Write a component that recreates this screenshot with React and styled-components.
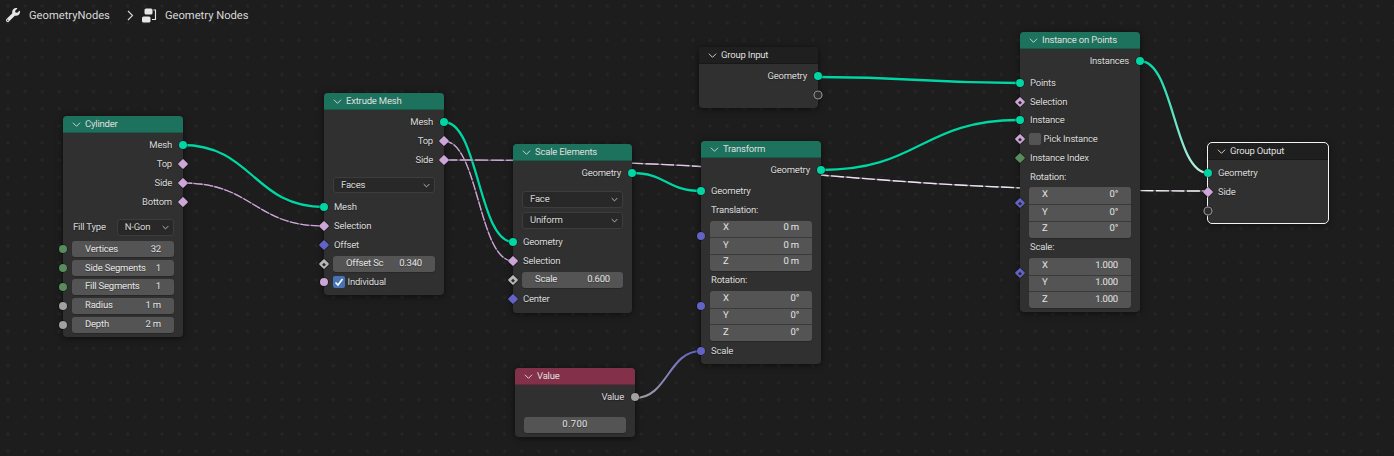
import React from "react";
import styled, { createGlobalStyle } from "styled-components";
import { FaWrench } from "react-icons/fa";

const GlobalStyle = createGlobalStyle`
  html, body { margin: 0; padding: 0; background: #1d1d1d; }
  * { box-sizing: border-box; }
`;

const TEAL = "#00d6a3";
const PINK = "#cca6d6";
const BLUE = "#6363c7";
const GREEN = "#598c5c";
const GREY = "#a1a1a1";

const Stage = styled.div`
  position: relative;
  width: 1394px;
  height: 456px;
  overflow: hidden;
  background-color: #1d1d1d;
  background-image: radial-gradient(circle, #262626 1.4px, transparent 1.7px);
  background-size: 17.14px 17.14px;
  background-position: -0.6px -2.6px;
  font-family: Roboto, "Open Sans", sans-serif;
  font-size: 9.5px;
  letter-spacing: -0.2px;
  text-rendering: geometricPrecision;
  color: #d8d8d8;
`;

const Crumbs = styled.div`
  position: absolute;
  top: 7px;
  left: 6px;
  height: 16px;
  display: flex;
  align-items: center;
  font-size: 11.2px;
  letter-spacing: 0;
  color: #d8d8d8;
`;

const CrumbText = styled.span`
  margin-left: ${(p) => p.$ml}px;
`;

const CrumbIcon = styled.span`
  display: flex;
  margin-left: ${(p) => p.$ml || 0}px;
  color: #e6e6e6;
`;

const WireLayer = styled.svg`
  position: absolute;
  inset: 0;
`;

const Node = styled.div`
  position: absolute;
  left: ${(p) => p.$x}px;
  top: ${(p) => p.$y}px;
  width: ${(p) => p.$w || 120}px;
  height: ${(p) => p.$h}px;
  background: #303030;
  border-radius: 4px;
  box-shadow: 0 1px 7px rgba(0, 0, 0, 0.55);
  outline: ${(p) => (p.$selected ? "1.5px solid #f4f4f4" : "none")};
`;

const Header = styled.div`
  height: 17px;
  display: flex;
  align-items: center;
  padding: 0 0 0 9px;
  gap: 4px;
  border-radius: 4px 4px 0 0;
  background: ${(p) => p.$bg};
  border-bottom: 1px solid rgba(0, 0, 0, 0.2);
  color: #dfdfdf;
`;

const Row = styled.div`
  position: relative;
  height: ${(p) => p.$h || 19}px;
  margin-top: ${(p) => p.$mt || 0}px;
  display: flex;
  align-items: center;
  justify-content: ${(p) => (p.$out ? "flex-end" : "flex-start")};
  padding: ${(p) => (p.$tight ? 0 : 1)}px ${(p) => (p.$out ? 11 : 9)}px 0 ${(p) => (p.$tight ? 9 : 10)}px;
  text-shadow: 0 1px 1px rgba(0, 0, 0, 0.35);
`;

const Socket = styled.span`
  position: absolute;
  top: 50%;
  ${(p) => (p.$out ? "right: -4px;" : "left: -4px;")}
  width: 8px;
  height: 8px;
  margin-top: -4px;
  background: ${(p) => p.$color || "#2e2e2e"};
  border: ${(p) => (p.$hollow ? "1px solid #9a9a9a" : "none")};
  border-radius: ${(p) => (p.$diamond ? "1px" : "50%")};
  transform: ${(p) => (p.$diamond ? "rotate(45deg) scale(0.92)" : p.$hollow ? "scale(1.15)" : "none")};
  box-shadow: 0 0 0 0.5px rgba(0, 0, 0, 0.6);
  &::after {
    content: "";
    display: ${(p) => (p.$dot ? "block" : "none")};
    width: 3px;
    height: 3px;
    margin: 2.5px;
    background: #2a2a2a;
  }
`;

const Field = styled.div`
  flex: 1;
  height: 16px;
  display: flex;
  align-items: center;
  justify-content: space-between;
  padding: 0 13px;
  background: #545454;
  border-radius: 3px;
  box-shadow: 0 1px 1px rgba(0, 0, 0, 0.2);
  color: #e4e4e4;
  white-space: nowrap;
`;

const CenteredField = styled(Field)`
  justify-content: center;
  letter-spacing: 0.3px;
`;

const Select = styled.div`
  flex: 1;
  height: 16.5px;
  display: flex;
  align-items: center;
  justify-content: space-between;
  padding: 0 4px 0 7px;
  background: #282828;
  border: 1px solid #3d3d3d;
  border-radius: 3px;
  color: #d9d9d9;
`;

const SideLabel = styled.span`
  width: ${(p) => p.$w}px;
`;

const Block = styled.div`
  position: relative;
  padding: 0 9px;
`;

const BlockLabel = styled.div`
  height: 20px;
  display: flex;
  align-items: center;
  padding: 0 0 0 1px;
`;

const Stack = styled.div`
  border-radius: 3px;
  overflow: hidden;
  box-shadow: 0 1px 1px rgba(0, 0, 0, 0.2);
`;

const StackRow = styled.div`
  height: 16.8px;
  display: flex;
  align-items: center;
  justify-content: space-between;
  padding: 0 13px 2px;
  background: #545454;
  color: #e4e4e4;
  & + & {
    border-top: 1px solid #3a3a3a;
  }
`;

const CheckBox = styled.span`
  width: 12px;
  height: 12px;
  margin-right: 2.5px;
  border-radius: 2px;
  display: flex;
  align-items: center;
  justify-content: center;
  background: ${(p) => (p.$on ? "#4772b3" : "#545454")};
`;

function Chevron({ size = 9, color = "#d0d0d0" }) {
  return (
    <svg width={size} height={size} viewBox="0 0 10 10" fill="none">
      <path d="M1 3 L5 7 L9 3" stroke={color} strokeWidth="1.1" strokeLinejoin="round" />
    </svg>
  );
}

function Dropdown({ children }) {
  return (
    <Select>
      {children}
      <Chevron size={7} color="#e0e0e0" />
    </Select>
  );
}

function Title({ bg, children }) {
  return (
    <Header $bg={bg}>
      <Chevron />
      {children}
    </Header>
  );
}

function Vector({ label, values, color, dot }) {
  return (
    <Block>
      <Socket $color={color} $diamond={dot} $dot={dot} />
      <BlockLabel>{label}</BlockLabel>
      <Stack>
        {["X", "Y", "Z"].map((axis, i) => (
          <StackRow key={axis}>
            <span>{axis}</span>
            <span>{values[i]}</span>
          </StackRow>
        ))}
      </Stack>
    </Block>
  );
}

function wirePath(x1, y1, x2, y2) {
  const h = (x2 - x1) / 2;
  return `M${x1} ${y1} C${x1 + h} ${y1} ${x2 - h} ${y2} ${x2} ${y2}`;
}

const wires = [
  { p: [182, 145, 324, 207], c: TEAL, w: 2.3 },
  { p: [444, 122, 513, 242], c: TEAL, w: 2.3 },
  { p: [632, 173, 701, 191], c: TEAL, w: 2.3 },
  { p: [818, 77, 1020, 83], c: TEAL, w: 2.3 },
  { p: [821, 170, 1020, 120], c: TEAL, w: 2.3 },
  { p: [1140, 61, 1208, 173], c: "url(#toSelected)", w: 2.3 },
  { p: [635, 398, 701, 351], c: "url(#valueToBlue)", w: 2.1 },
  { p: [183, 183, 324, 226], c: PINK, w: 1.3, dash: "9 1.5" },
  { p: [444, 141, 513, 261], c: PINK, w: 1.3, dash: "9 1.5" },
  { p: [444, 160, 1208, 191], c: "url(#sideToOutput)", w: 1.4, dash: "13 2.5" },
];

function Wires() {
  return (
    <WireLayer width="1394" height="456" fill="none">
      <defs>
        <linearGradient id="toSelected" gradientUnits="userSpaceOnUse" x1="1140" y1="61" x2="1208" y2="173">
          <stop offset="0" stopColor={TEAL} />
          <stop offset="1" stopColor="#c4efe4" />
        </linearGradient>
        <linearGradient id="valueToBlue" gradientUnits="userSpaceOnUse" x1="635" y1="398" x2="701" y2="351">
          <stop offset="0" stopColor={GREY} />
          <stop offset="1" stopColor={BLUE} />
        </linearGradient>
        <linearGradient id="sideToOutput" gradientUnits="userSpaceOnUse" x1="444" y1="160" x2="1208" y2="191">
          <stop offset="0" stopColor={PINK} />
          <stop offset="0.5" stopColor="#eadff0" />
          <stop offset="1" stopColor="#f4f4f4" />
        </linearGradient>
      </defs>
      {wires.map(({ p, c, w, dash }) => (
        <g key={p.join()}>
          <path d={wirePath(...p)} stroke="#141414" strokeWidth={w + 1} strokeOpacity="0.5" />
          {dash && <path d={wirePath(...p)} stroke={PINK} strokeWidth={w} strokeOpacity="0.45" />}
          <path d={wirePath(...p)} stroke={c} strokeWidth={w} strokeDasharray={dash} />
        </g>
      ))}
    </WireLayer>
  );
}

export default function App() {
  return (
    <Stage>
      <GlobalStyle />
      <Wires />

      <Crumbs>
        <CrumbIcon><FaWrench size={14} /></CrumbIcon>
        <CrumbText $ml={9}>GeometryNodes</CrumbText>
        <CrumbIcon $ml={17}>
          <svg width="7" height="11" viewBox="0 0 7 11" fill="none">
            <path d="M1 1 L5.5 5.5 L1 10" stroke="#d8d8d8" strokeWidth="1.1" />
          </svg>
        </CrumbIcon>
        <CrumbIcon $ml={8}>
          <svg width="15" height="15" viewBox="0 0 15 15" fill="none">
            <rect x="2.5" y="0.5" width="8" height="6" rx="1.5" fill="#e6e6e6" />
            <rect x="0" y="8.5" width="8.5" height="6" rx="1.5" fill="#e6e6e6" />
            <path d="M11.5 2 H13.5 V11.5 H10" stroke="#e6e6e6" strokeWidth="1.1" />
          </svg>
        </CrumbIcon>
        <CrumbText $ml={8}>Geometry Nodes</CrumbText>
      </Crumbs>

      <Node $x={63} $y={116} $h={221}>
        <Title bg="#1d725e">Cylinder</Title>
        <Row $out $mt={2.5}>Mesh<Socket $out $color={TEAL} /></Row>
        <Row $out>Top<Socket $out $diamond $color={PINK} /></Row>
        <Row $out>Side<Socket $out $diamond $color={PINK} /></Row>
        <Row $out>Bottom<Socket $out $diamond $color={PINK} /></Row>
        <Row $mt={6}><SideLabel $w={43.7}>Fill Type</SideLabel><Dropdown>N-Gon</Dropdown></Row>
        <Row $tight $h={18.8} $mt={3.5}><Socket $color={GREEN} /><Field><span>Vertices</span><span>32</span></Field></Row>
        <Row $tight $h={18.8}><Socket $color={GREEN} /><Field><span>Side Segments</span><span>1</span></Field></Row>
        <Row $tight $h={18.8}><Socket $color={GREEN} /><Field><span>Fill Segments</span><span>1</span></Field></Row>
        <Row $tight $h={18.8}><Socket $color={GREY} /><Field><span>Radius</span><span>1 m</span></Field></Row>
        <Row $tight $h={18.8}><Socket $color={GREY} /><Field><span>Depth</span><span>2 m</span></Field></Row>
      </Node>

      <Node $x={324} $y={93} $h={202}>
        <Title bg="#1d725e">Extrude Mesh</Title>
        <Row $out $mt={2.5}>Mesh<Socket $out $color={TEAL} /></Row>
        <Row $out>Top<Socket $out $diamond $color={PINK} /></Row>
        <Row $out>Side<Socket $out $diamond $color={PINK} /></Row>
        <Row $tight $mt={6}><Dropdown>Faces</Dropdown></Row>
        <Row $mt={3}>Mesh<Socket $color={TEAL} /></Row>
        <Row>Selection<Socket $diamond $color={PINK} /></Row>
        <Row>Offset<Socket $diamond $color={BLUE} /></Row>
        <Row $tight $h={18.5}><Socket $diamond $dot $color="#b8b8b8" /><Field><span>Offset Sc</span><span>0.340</span></Field></Row>
        <Row $tight $h={18.5}>
          <Socket $color={PINK} />
          <CheckBox $on>
            <svg width="10" height="10" viewBox="0 0 10 10" fill="none">
              <path d="M1.5 5.5 L4 8 L8.5 2" stroke="#fff" strokeWidth="1.6" />
            </svg>
          </CheckBox>
          Individual
        </Row>
      </Node>

      <Node $x={513} $y={144} $w={119} $h={169}>
        <Title bg="#1d725e">Scale Elements</Title>
        <Row $out $mt={2.5}>Geometry<Socket $out $color={TEAL} /></Row>
        <Row $tight $mt={6.5} $h={21}><Dropdown>Face</Dropdown></Row>
        <Row $tight $h={21}><Dropdown>Uniform</Dropdown></Row>
        <Row $mt={1}>Geometry<Socket $color={TEAL} /></Row>
        <Row>Selection<Socket $diamond $color={PINK} /></Row>
        <Row $tight><Socket $diamond $dot $color="#b8b8b8" /><Field><span>Scale</span><span>0.600</span></Field></Row>
        <Row>Center<Socket $diamond $color={BLUE} /></Row>
      </Node>

      <Node $x={701} $y={141} $h={223}>
        <Title bg="#1d725e">Transform</Title>
        <Row $out $mt={2.5}>Geometry<Socket $out $color={TEAL} /></Row>
        <Row $mt={2}>Geometry<Socket $color={TEAL} /></Row>
        <Vector label="Translation:" values={["0 m", "0 m", "0 m"]} color={BLUE} />
        <Vector label="Rotation:" values={["0°", "0°", "0°"]} color={BLUE} />
        <Row $mt={0.5}>Scale<Socket $color={BLUE} /></Row>
      </Node>

      <Node $x={515} $y={368} $h={69}>
        <Title bg="#83314a">Value</Title>
        <Row $out $mt={2.5}>Value<Socket $out $color={GREY} /></Row>
        <Row $tight $mt={9.5} $h={17}><CenteredField>0.700</CenteredField></Row>
      </Node>

      <Node $x={699} $y={47} $w={119} $h={61}>
        <Title bg="#1f1f1f">Group Input</Title>
        <Row $out $mt={2.5}>Geometry<Socket $out $color={TEAL} /></Row>
        <Row $out><Socket $out $hollow /></Row>
      </Node>

      <Node $x={1020} $y={32} $h={280}>
        <Title bg="#1d725e">Instance on Points</Title>
        <Row $out $mt={2.5}>Instances<Socket $out $color={TEAL} /></Row>
        <Row $mt={3} $h={18.8}>Points<Socket $color={TEAL} /></Row>
        <Row $h={18.8}>Selection<Socket $diamond $dot $color={PINK} /></Row>
        <Row $h={18.8}>Instance<Socket $color={TEAL} /></Row>
        <Row $tight $h={18.8}><Socket $diamond $dot $color={PINK} /><CheckBox />Pick Instance</Row>
        <Row $h={18.8}>Instance Index<Socket $diamond $color={GREEN} /></Row>
        <Vector label="Rotation:" values={["0°", "0°", "0°"]} color={BLUE} dot />
        <Vector label="Scale:" values={["1.000", "1.000", "1.000"]} color={BLUE} dot />
      </Node>

      <Node $x={1208} $y={143} $h={80} $selected>
        <Title bg="#1f1f1f">Group Output</Title>
        <Row $mt={3.5}>Geometry<Socket $color={TEAL} /></Row>
        <Row $h={18.5}>Side<Socket $diamond $color={PINK} /></Row>
        <Row><Socket $hollow /></Row>
      </Node>
    </Stage>
  );
}
